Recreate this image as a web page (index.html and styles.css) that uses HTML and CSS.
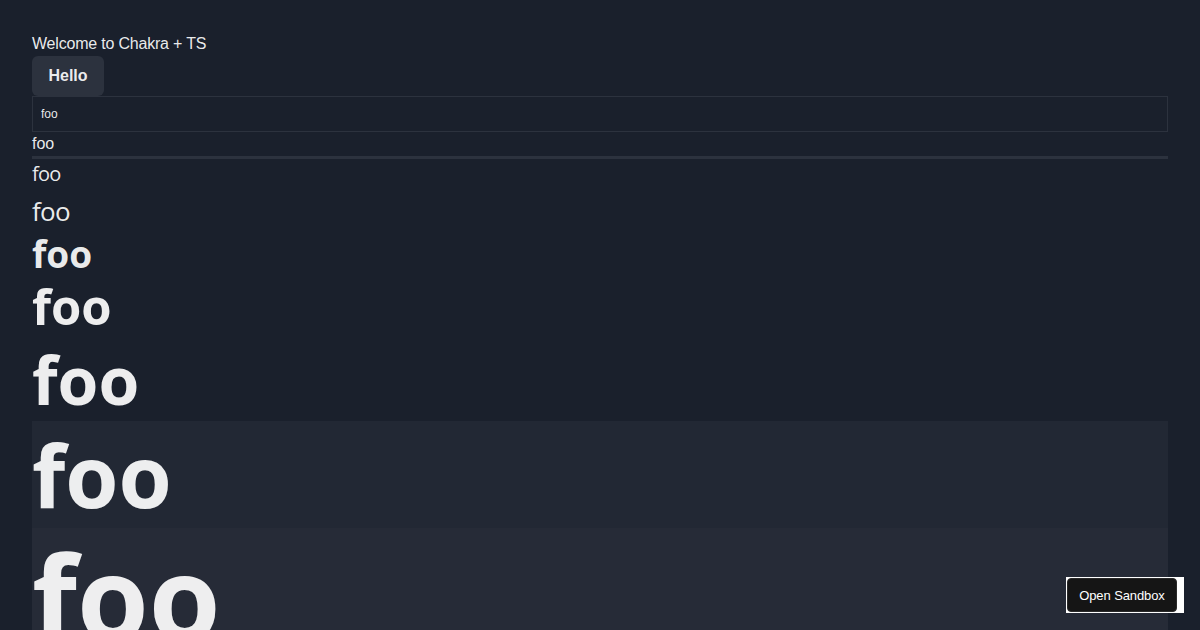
FILE: index.html
```html
<!DOCTYPE html>
<html lang="en">
<head>
    <meta charset="UTF-8">
    <meta name="viewport" content="width=device-width, initial-scale=1.0">
    <title>Chakra + TS</title>
    <link rel="stylesheet" href="styles.css">
</head>
<body class="background-dark">

    <div class="page">
        <div class="welcome">Welcome to Chakra + TS</div>

        <div>
            <button class="hello">Hello</button>
        </div>

        <input class="field" type="text" value="foo">

        <div class="text">foo</div>

        <div class="divider"></div>

        <!-- headings, smallest to biggest -->
        <div class="head head-1">foo</div>
        <div class="head head-2">foo</div>
        <div class="head head-3">foo</div>
        <div class="head head-4">foo</div>
        <div class="head head-5">foo</div>
        <div class="head head-6 tint-1">foo</div>
        <div class="head head-7 tint-2">foo</div>
    </div>

    <div class="sandbox">
        <button class="sandbox-button">Open Sandbox</button>
    </div>

</body>
</html>
```

FILE: styles.css
```css
.background-dark {
    background-color: #1a202c;
    margin: 0;
    color: rgba(255, 255, 255, 0.92);
    font-family: 'Liberation Sans', Arial, sans-serif;
    font-size: 16px;
    line-height: 24px;
    overflow: hidden;
}

.page {
    padding: 32px;
}

.welcome {
    height: 24px;
    letter-spacing: -0.2px;
}

.hello {
    width: 72px;
    height: 40px;
    padding: 0;
    border: none;
    border-radius: 6px;
    background-color: #2c323e;
    color: rgba(255, 255, 255, 0.92);
    font-family: 'Liberation Sans', Arial, sans-serif;
    font-size: 16px;
    font-weight: bold;
    display: block;
}

.field {
    display: block;
    box-sizing: border-box;
    width: 100%;
    height: 36px;
    margin: 0;
    padding: 0 8px;
    border: 1px solid #2c323e;
    border-radius: 0;
    background: transparent;
    color: rgba(255, 255, 255, 0.92);
    font-family: 'Liberation Sans', Arial, sans-serif;
    font-size: 12px;
    outline: none;
}

.text {
    height: 24px;
}

.divider {
    height: 3px;
    background-color: #2c323e;
}

.head {
    font-family: 'Open Sans', 'Noto Sans', sans-serif;
}

.head-1 {
    font-size: 20px;
    line-height: 30px;
    letter-spacing: -0.7px;
}

.head-2 {
    font-size: 26px;
    line-height: 45px;
    letter-spacing: -0.7px;
}

.head-3 {
    font-size: 37px;
    line-height: 40px;
    font-weight: bold;
}

.head-4 {
    font-size: 49px;
    line-height: 64px;
    font-weight: bold;
}

.head-5 {
    font-size: 66px;
    line-height: 83px;
    font-weight: bold;
}

.head-6 {
    font-size: 86px;
    line-height: 107px;
    font-weight: bold;
}

.head-7 {
    font-size: 116px;
    line-height: 137px;
    font-weight: bold;
}

.tint-1 {
    background-color: #222834;
}

.tint-2 {
    background-color: #262b37;
}

.sandbox {
    position: fixed;
    right: 16px;
    bottom: 17px;
    background-color: #ffffff;
    padding: 1px 7px 1px 1px;
    display: flex;
}

.sandbox-button {
    width: 110px;
    height: 34px;
    padding: 0;
    border: 1px solid #2a2a2a;
    border-radius: 4px;
    background-color: #151515;
    color: #ffffff;
    font-family: 'Liberation Sans', Arial, sans-serif;
    font-size: 13px;
    letter-spacing: -0.1px;
}
```
